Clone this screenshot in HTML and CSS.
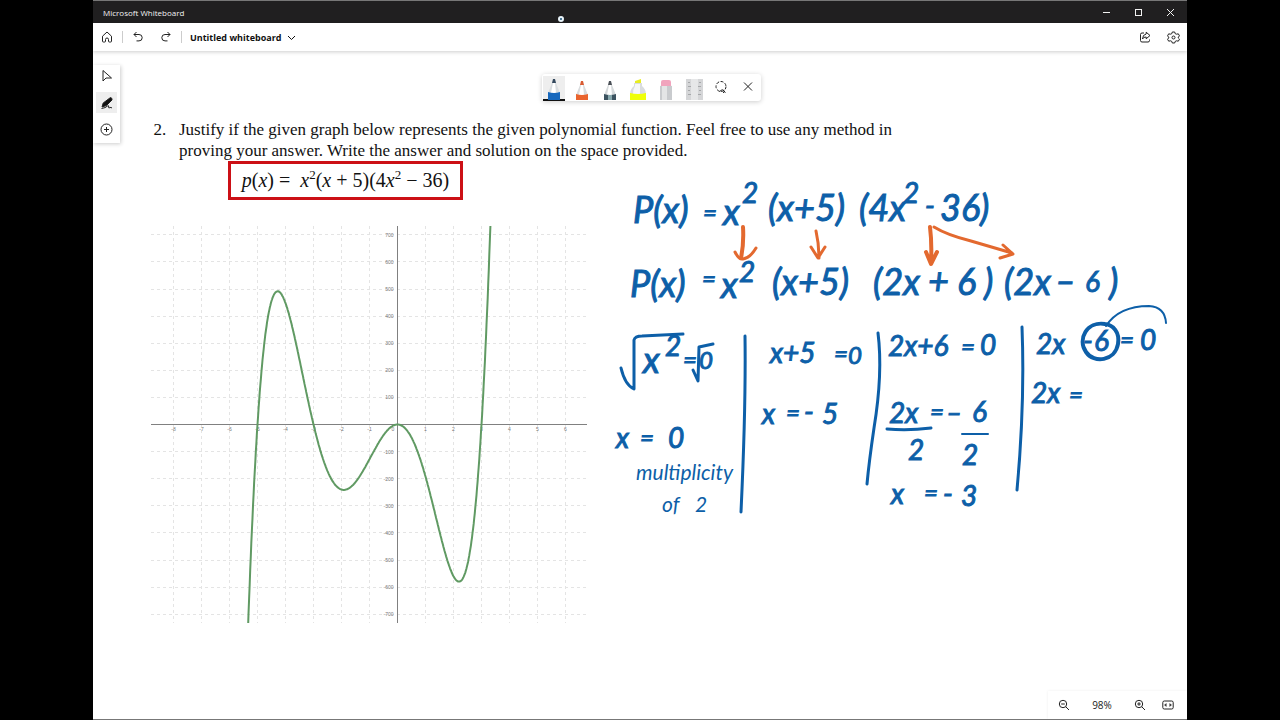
FILE: index.html
```html
<!DOCTYPE html>
<html lang="en">
<head>
<meta charset="utf-8">
<title>Microsoft Whiteboard</title>
<link rel="stylesheet" href="styles.css">
</head>
<body>
<div class="window">
  <header class="titlebar">
    <span class="app-name">Microsoft Whiteboard</span>
    <span class="pointer-dot"></span>
    <div class="window-controls">
      <button aria-label="Minimize"><svg width="9" height="9" viewBox="0 0 9 9"><path d="M1 4.500h7"/></svg></button>
      <button aria-label="Maximize"><svg width="9" height="9" viewBox="0 0 9 9"><rect x="1.500" y="1.500" width="6" height="6"/></svg></button>
      <button aria-label="Close"><svg width="9" height="9" viewBox="0 0 9 9"><path d="M1 1l7 7M8 1L1 8"/></svg></button>
    </div>
  </header>

  <nav class="menubar">
    <button class="icon-button" aria-label="Home"><svg width="12" height="12" viewBox="0 0 12 12"><path d="M1.500 5.200L6 1l4.500 4.200V10.200q0 .8-.8.8H8.300q-.8 0-.8-.8V8.500a1.500 1.500 0 0 0-3 0v1.700q0 .8-.8.8H2.300q-.8 0-.8-.8z"/></svg></button>
    <span class="divider"></span>
    <button class="icon-button" aria-label="Undo"><svg width="12" height="12" viewBox="0 0 12 12"><path d="M4.500 1L2 3.500 4.500 6M2 3.500h5a3.200 3.200 0 1 1 0 6.400H4.500"/></svg></button>
    <button class="icon-button" aria-label="Redo"><svg width="12" height="12" viewBox="0 0 12 12"><path d="M7.500 1L10 3.500 7.500 6M10 3.500H5a3.200 3.200 0 1 0 0 6.400h2.500"/></svg></button>
    <span class="divider"></span>
    <button class="board-name">Untitled whiteboard
      <svg width="9" height="9" viewBox="0 0 9 9"><path d="M1 3l3.500 3.500L8 3"/></svg>
    </button>
    <div class="menu-right">
      <button class="icon-button" aria-label="Share"><svg width="12" height="12" viewBox="0 0 12 12"><path d="M5 2H3Q1.500 2 1.500 3.500V9.500Q1.500 11 3 11H9Q10.500 11 10.500 9.500V8.500M7.200 1.200L11 4.500 7.200 7.800V6Q4.500 5.800 3.500 8 3.700 3.500 7.200 3z"/></svg></button>
      <button class="icon-button" aria-label="Settings"><svg width="13" height="13" viewBox="0 0 13 13"><path d="M5.300 1h2.400l.5 1.700 1.500.5 1.600-.4 1.200 2.100-1.200 1.200v.9l1.200 1.200-1.200 2-1.700-.4-1.400.6-.5 1.600H5.300l-.5-1.600-1.400-.6-1.700.4-1.200-2L1.700 7v-.9L.5 4.900l1.200-2.100 1.600.4 1.500-.5z"/><circle cx="6.500" cy="6.500" r="1.500"/></svg></button>
    </div>
  </nav>

  <main class="board">
    <article class="problem">
      <ol class="question" start="2">
        <li>Justify if the given graph below represents the given polynomial function. Feel free to use any method in proving your answer. Write the answer and solution on the space provided.</li>
      </ol>
      <p class="formula"><i>p</i>(<i>x</i>) =&nbsp; <i>x</i><sup>2</sup>(<i>x</i> + 5)(4<i>x</i><sup>2</sup> − 36)</p>
      <svg class="graph" id="graph" width="436" height="397" viewBox="151 226 436 397" role="img" aria-label="Graph of the polynomial"></svg>
    </article>

    <svg class="ink" width="1094" height="668" viewBox="93 51 1094 668">
      <g class="ink-large">
        <text x="633" y="223">P(x)</text>
        <text x="723" y="225">x</text>
        <text x="768" y="221">(x+5)</text>
        <text x="859" y="221">(4x</text>
        <text x="940" y="221">36)</text>
        <text x="630" y="297">P(x)</text>
        <text x="721" y="298">x</text>
        <text x="772" y="295">(x+5)</text>
        <text x="873" y="295">(2x</text>
        <text x="928" y="294">+</text>
        <text x="957" y="295">6</text>
        <text x="984" y="295">)</text>
        <text x="1004" y="295">(2x</text>
        <text x="1055" y="294">–</text>
        <text x="1109" y="295">)</text>
        <text x="643" y="373">x</text>
      </g>
      <g class="ink-medium">
        <text x="742" y="203">2</text>
        <text x="903" y="203">2</text>
        <text x="925" y="216">-</text>
        <text x="739" y="282">2</text>
        <text x="1085" y="292">6</text>
        <text x="665" y="356">2</text>
        <text x="770" y="363">x+5</text>
        <text x="888" y="356">2x+6</text>
        <text x="980" y="355">0</text>
        <text x="1036" y="354">2x</text>
        <text x="1083" y="351">-</text>
        <text x="1094" y="351">6</text>
        <text x="1140" y="350">0</text>
        <text x="762" y="424">x</text>
        <text x="804" y="422">-</text>
        <text x="822" y="424">5</text>
        <text x="889" y="423">2x</text>
        <text x="946" y="423">–</text>
        <text x="972" y="422">6</text>
        <text x="1031" y="403">2x</text>
        <text x="908" y="460">2</text>
        <text x="962" y="465">2</text>
        <text x="891" y="504">x</text>
        <text x="943" y="504">-</text>
        <text x="961" y="506">3</text>
        <text x="616" y="448">x</text>
        <text x="668" y="448">0</text>
      </g>
      <g class="ink-equals">
        <text x="703" y="221">=</text>
        <text x="702" y="287">=</text>
        <text x="683" y="368">=</text>
        <text x="699" y="369">0</text>
        <text x="834" y="362">=</text>
        <text x="848" y="364">0</text>
        <text x="961" y="355">=</text>
        <text x="1120" y="348">=</text>
        <text x="786" y="421">=</text>
        <text x="930" y="420">=</text>
        <text x="1069" y="403">=</text>
        <text x="924" y="501">=</text>
        <text x="640" y="446">=</text>
      </g>
      <g class="ink-small">
        <text x="636" y="480">multiplicity</text>
        <text x="662" y="512">of</text>
        <text x="695" y="512">2</text>
      </g>
      <g class="ink-line">
        <path d="M621 368q4 17 13 21V340q1-4 8-4l41-2"/>
        <path d="M693 370l5 11 1-34 14-3"/>
        <path d="M745 336q1 70-4 176"/>
        <path d="M878 333q5 40-4 95-5 34-7 56"/>
        <path d="M1022 327q3 76-5 163"/>
        <path class="thick" d="M1105 324c-18-3-28 15-19 28 8 12 29 9 32-8 2-12-5-19-13-20z"/>
        <path class="thin" d="M1106 326q13-20 43-20 16 1 17 17"/>
        <path d="M887 429q21 2 44-1"/>
        <path class="thin" d="M962 434h26"/>
      </g>
      <g class="arrows">
        <path class="thick" d="M743 227q1 16-2 31"/>
        <path d="M735 252q4 8 8 7 7-1 13-11"/>
        <path d="M816 231q3 13 3 27M811 247l7 11 7-11"/>
        <path class="thick" d="M930 227q2 16 1 36M926 252l5 12 6-12"/>
        <path d="M934 227q13 8 37 14l41 12M1003 245l10 9-13 4"/>
      </g>
    </svg>

    <aside class="side-tools">
      <button class="tool" aria-label="Select"><svg width="12" height="14" viewBox="0 0 12 14"><path d="M2 1.500v10.500l3-3h5.500z"/></svg></button>
      <button class="tool selected" aria-label="Inking"><svg width="14" height="14" viewBox="0 0 14 14"><path class="solid" d="M10.500 1.500q2 .5 1.500 2.500L6.500 9.500 2 11l1.200-4z"/><path d="M1.500 12.500q4-.5 6-2.500 1.500-1 1.200 1-.2 1.500 1 .7 1.300-.7 2.300.3"/></svg></button>
      <button class="tool" aria-label="Create"><svg width="13" height="13" viewBox="0 0 13 13"><circle cx="6.500" cy="6.500" r="5.500"/><path d="M6.500 4v5M4 6.500h5"/></svg></button>
    </aside>

    <div class="pen-tools">
      <button class="pen active" aria-label="Blue pen"><svg width="22" height="24" viewBox="0 0 22 24"><path fill="#d9dde0" d="M9 7h4l4 10H5z"/><path fill="#fff" d="M10 7h2l1 10H8z"/><path fill="#34495e" d="M9 7l1-4h2l1 4z"/><path fill="#1768bd" d="M5 16q6 2 12 0v8H5z"/></svg></button>
      <button class="pen" aria-label="Orange pen"><svg width="22" height="24" viewBox="0 0 22 24"><path fill="#d9dcde" d="M9 9h4l4 10H5z"/><path fill="#fff" d="M10 9h2l1 10H8z"/><path fill="#d95b32" d="M9 9l1-4h2l1 4z"/><path fill="#ea642e" d="M5 18q6 2 12 0v6H5z"/></svg></button>
      <button class="pen" aria-label="Galaxy pen"><svg width="22" height="24" viewBox="0 0 22 24"><path fill="#d5d9db" d="M9 9h4l4 10H5z"/><path fill="#fff" d="M10 9h2l1 10H8z"/><path fill="#4a5057" d="M9 9l1-4h2l1 4z"/><path fill="#3c5360" d="M5 18q6 2 12 0v6H5z"/><path fill="#89a9ae" d="M9 19h4v5H9z"/></svg></button>
      <button class="pen" aria-label="Yellow highlighter"><svg width="22" height="24" viewBox="0 0 22 24"><path fill="#e7ed22" d="M8 8V5l6-2v5z"/><path fill="#d9dcdf" d="M7 7h8v3q4 3 4 9H3q0-6 4-9z"/><path fill="#f6f7f8" d="M8 8h5v10H6q0-5 2-8z"/><path fill="#efff08" d="M3 17q8 2 16 0v7H3z"/></svg></button>
      <button class="pen" aria-label="Eraser"><svg width="22" height="24" viewBox="0 0 22 24"><path fill="#c9cbce" d="M5 10q6-2 12 0v14H5z"/><path fill="#e4e5e6" d="M7 10h5v14H7z"/><path fill="#f1a4bd" d="M6 10V6q0-2 2-2h6q2 0 2 2v4z"/></svg></button>
      <button class="pen" aria-label="Ruler"><svg width="22" height="24" viewBox="0 0 22 24"><path fill="#d5d6d8" d="M3 3h17v21H3z"/><path fill="#e6e7e8" d="M8 3h7v21H8z"/><path stroke="#a6a8aa" d="M5 6.500h2M5 10.500h3M5 14.500h2M5 18.500h3M18 6.500h-2M18 10.500h-3M18 14.500h-2M18 18.500h-3"/></svg></button>
      <button class="pen line-icon" aria-label="Lasso select"><svg width="22" height="24" viewBox="0 0 22 24"><circle cx="10" cy="10.500" r="5" stroke-dasharray="3 1.500"/><path d="M8.500 15.500q3-3 4.500-1t-1 2.200M12.500 14.500l2 2"/></svg></button>
      <button class="pen line-icon" aria-label="Close pens"><svg width="22" height="24" viewBox="0 0 22 24"><path d="M5 6.500l8 8M13 6.500l-8 8"/></svg></button>
    </div>

    <div class="zoom-tools">
      <button class="icon-button" aria-label="Zoom out"><svg width="12" height="12" viewBox="0 0 12 12"><circle cx="5" cy="5" r="3.700"/><path d="M7.800 7.800l3.200 3.200M3.200 5h3.600"/></svg></button>
      <span class="zoom-value">98%</span>
      <button class="icon-button" aria-label="Zoom in"><svg width="12" height="12" viewBox="0 0 12 12"><circle cx="5" cy="5" r="3.700"/><path d="M7.800 7.800l3.200 3.200M3.200 5h3.600M5 3.200v3.600"/></svg></button>
      <button class="icon-button" aria-label="Fit to screen"><svg width="12" height="12" viewBox="0 0 12 12"><rect x=".8" y="2" width="10.400" height="8" rx="1.500"/><path d="M4.200 4.500L2.700 6l1.500 1.500M7.800 4.500L9.300 6 7.800 7.500M3 6h2M7 6h2"/></svg></button>
    </div>
  </main>
</div>
<script src="graph.js"></script>
</body>
</html>
```
FILE: styles.css
```css
* { box-sizing: border-box; }

body {
  margin: 0;
  background: #000;
  color: #222;
  font-family: "Open Sans", "Noto Sans", sans-serif;
}

button {
  display: flex;
  align-items: center;
  justify-content: center;
  border: 0;
  padding: 0;
  background: none;
  color: inherit;
  font: inherit;
}

svg { display: block; }

.window {
  display: flex;
  flex-direction: column;
  min-height: 100vh;
  margin: 0 93px;
  background: #fff;
  border-bottom: 1px solid #777;
}

.titlebar {
  position: relative;
  display: flex;
  align-items: center;
  justify-content: space-between;
  height: 23px;
  padding: 0 12px 0 10px;
  border-top: 1px solid #777;
  background: #201f20;
  color: #f2f2f2;
}

.app-name { font-size: 8px; }

.pointer-dot {
  position: absolute;
  left: 465px;
  top: 15px;
  width: 6px;
  height: 6px;
  border: 2px solid #eaf4fa;
  border-radius: 50%;
  background: #174b70;
}

.window-controls { display: flex; gap: 23px; }

.window-controls svg,
.icon-button svg,
.board-name svg,
.tool svg,
.line-icon svg {
  fill: none;
  stroke: currentColor;
}

.menubar {
  position: relative;
  z-index: 1;
  display: flex;
  align-items: center;
  height: 28px;
  padding: 0 7px;
  background: #fff;
  box-shadow: 0 1px 4px #0003;
}

.icon-button { width: 14px; height: 14px; }

.divider {
  width: 1px;
  height: 12px;
  margin: 0 8px;
  background: #ccc;
}

.menubar .divider + .icon-button + .icon-button { margin-left: 14px; }

.board-name {
  gap: 6px;
  color: #111;
  font-size: 9px;
  font-weight: 700;
}

.menu-right {
  display: flex;
  gap: 14px;
  margin-left: auto;
}

.board {
  position: relative;
  flex: 1;
  overflow: hidden;
}

.problem {
  width: 840px;
  padding: 68px 0 0 58px;
  color: #111;
  font-family: "Liberation Serif", serif;
}

.question {
  margin: 0;
  padding-left: 28px;
  font-size: 17px;
  line-height: 21px;
}

.question li::marker { content: counter(list-item) ".\a0\a0\a0"; }

.formula {
  width: 235px;
  height: 39px;
  margin: 0 0 0 77px;
  border: 3px solid #cc1016;
  font-size: 20px;
  line-height: 33px;
  text-align: center;
  white-space: nowrap;
}

.formula sup {
  font-size: 13px;
  line-height: 0;
}

.graph { margin-top: 26px; }

.grid-line {
  stroke: #e4e4e4;
  stroke-dasharray: 3 3;
}

.axis { stroke: #808080; stroke-width: 1; }

.curve {
  fill: none;
  stroke: #609a63;
  stroke-width: 2;
}

.tick {
  fill: #777;
  font-family: "Liberation Sans", sans-serif;
  font-size: 5px;
}

.ink {
  position: absolute;
  left: 0;
  top: 0;
  pointer-events: none;
}

.ink text {
  fill: #0d5fa8;
  stroke: #0d5fa8;
  font-family: Lato, sans-serif;
  font-style: italic;
}

.ink-large { font-size: 36px; }
.ink-medium { font-size: 28px; }
.ink-equals { font-size: 24px; }
.ink-small { font-size: 21px; }
.ink-small text { stroke-width: 0; }

.ink-line,
.arrows {
  fill: none;
  stroke: #0d5fa8;
  stroke-width: 3;
  stroke-linecap: round;
  stroke-linejoin: round;
}

.arrows { stroke: #e3692f; }
.thin { stroke-width: 2; }
.thick { stroke-width: 4; }

.side-tools {
  position: absolute;
  left: 0;
  top: 14px;
  display: flex;
  flex-direction: column;
  gap: 6px;
  padding: 0 3px 3px;
  background: #fff;
  box-shadow: 1px 1px 4px #0003;
}

.tool { width: 21px; height: 21px; }
.tool.selected { background: #eee; }
.tool .solid { fill: #111; }

.pen-tools {
  position: absolute;
  left: 41%;
  top: 23px;
  display: flex;
  gap: 6px;
  padding: 2px 0 0 1px;
  border-radius: 3px;
  background: #fff;
  box-shadow: 0 1px 5px #0003;
}

.pen { height: 25px; align-items: flex-start; }

.pen.active {
  background: #eee;
  border-bottom: 2px solid #111;
}

.zoom-tools {
  position: absolute;
  right: 0;
  bottom: 0;
  display: flex;
  align-items: center;
  height: 28px;
  padding: 0 12px 0 9px;
  background: #fff;
  box-shadow: 0 0 3px #0001;
}

.zoom-value {
  width: 62px;
  font-size: 10px;
  text-align: center;
}

.zoom-tools .icon-button + .icon-button { margin-left: 14px; }
```
FILE: graph.js
```js
const svg = document.getElementById("graph");
const left = 151, right = 587, top_ = 226, bottom = 623;
const toX = x => 397.5 + x * 28;
const toY = y => 424.5 - y * 0.271;

function add(tag, attrs, text) {
  const node = document.createElementNS("http://www.w3.org/2000/svg", tag);
  for (const key in attrs) node.setAttribute(key, attrs[key]);
  if (text !== undefined) node.textContent = text;
  svg.append(node);
}

function line(cls, x1, y1, x2, y2) {
  add("line", { class: cls, x1, y1, x2, y2 });
}

for (let n = -8; n <= 6; n++) {
  if (n === 0) continue;
  line("grid-line", toX(n), top_, toX(n), bottom);
}
for (let n = -700; n <= 700; n += 100) {
  if (n === 0) continue;
  line("grid-line", left, Math.floor(toY(n)) + 0.5, right, Math.floor(toY(n)) + 0.5);
}

line("axis", left, toY(0), right, toY(0));
line("axis", toX(0), top_, toX(0), bottom);

for (let n = -8; n <= 6; n++) {
  if (n === 0) add("text", { class: "tick", x: toX(0) - 6, y: 431 }, "0");
  else add("text", { class: "tick", x: toX(n), y: 431, "text-anchor": "middle" }, n);
}
for (let n = -700; n <= 700; n += 100) {
  if (n !== 0) add("text", { class: "tick", x: toX(0) - 4, y: toY(n) + 2, "text-anchor": "end" }, n);
}

const points = [];
for (let x = -5.4; x <= 3.4; x += 0.02) {
  points.push(toX(x).toFixed(1) + "," + toY(x * x * (x + 5) * (4 * x * x - 36)).toFixed(1));
}
add("polyline", { class: "curve", points: points.join(" ") });
```
